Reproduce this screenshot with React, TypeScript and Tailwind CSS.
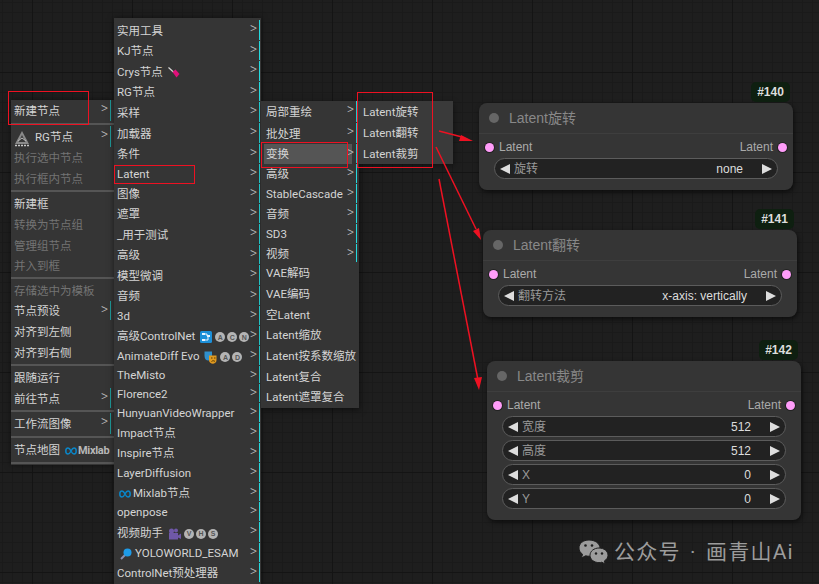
import React from 'react';

type Row = {
  label?: string;
  h: string;
  sub?: boolean;
  off?: boolean;
  hover?: boolean;
  icon?: React.ReactNode;
  after?: React.ReactNode;
  divider?: boolean;
};

const Badge = ({ t }: { t: string }) => (
  <span className="flex h-[10px] w-[10px] items-center justify-center rounded-full bg-[#b4b4b4] font-['Liberation_Sans',sans-serif] text-[7px] font-bold leading-none text-[#555]">
    {t}
  </span>
);

const Letters = ({ items }: { items: string[] }) => (
  <span className="ml-[3px] flex gap-[2px]">
    {items.map(t => <Badge key={t} t={t} />)}
  </span>
);

const Infinity2 = () => (
  <svg width="12" height="8" viewBox="0 0 12 8" fill="none" stroke="#0a86c8" strokeWidth="1.5" className="shrink-0">
    <path d="M6 4C5 2 4 1 3 1 1.700 1 .8 2.300.8 4S1.700 7 3 7c1 0 2-1 3-3s2-3 3-3c1.300 0 2.200 1.300 2.200 3S10.300 7 9 7C8 7 7 6 6 4Z" />
  </svg>
);

const RgLogo = () => (
  <svg width="16" height="17" viewBox="0 0 16 17" className="mr-[5px] shrink-0">
    <path d="M8 1 15 14H1Z" fill="#8a8a8a" />
    <path d="M8 5 11.500 12H4.500Z" fill="#3a3a3a" />
    <path d="M4 11 8 8 12 11" stroke="#bbb" fill="none" />
    <path d="M1 15.500H15" stroke="#c8c8c8" strokeWidth="1.500" strokeDasharray="2 1" />
  </svg>
);

const Brush = () => (
  <svg width="12" height="11" viewBox="0 0 12 11" className="ml-[5px] shrink-0">
    <path d="M0.500 0.500 6 5.500" stroke="#d8d8d8" strokeWidth="1.200" />
    <path d="M4.500 5 7.500 2.500 11.500 7 8.500 10.500Z" fill="#e0107a" />
  </svg>
);

const NetIcon = () => (
  <svg width="12" height="12" viewBox="0 0 12 12" className="ml-[5px] shrink-0">
    <rect width="12" height="12" rx="1.500" fill="#1c8fd8" />
    <path d="M2 2h3v2H2zM7 4h3v2H7zM2 8h3v2H2z" fill="#e8f4ff" />
    <path d="M5 3h2v2M5 9h3V6" stroke="#e8f4ff" fill="none" />
  </svg>
);

const Masks = () => (
  <svg width="13" height="13" viewBox="0 0 13 13" className="ml-[5px] shrink-0">
    <path d="M0.500 0.500H8V5C8 8 6 9.500 4.200 9.500S0.500 8 0.500 5Z" fill="#2f8fcc" />
    <path d="M5 4.500H12.500V9C12.500 11.500 10.500 12.800 8.800 12.800S5 11.500 5 9Z" fill="#e09a20" />
    <path d="M7 7h1.500M10 7h1.500M7.500 10.500c1-1 2.500-1 3.500 0" stroke="#5a3a00" fill="none" />
  </svg>
);

const Camera = () => (
  <svg width="13" height="12" viewBox="0 0 13 12" className="ml-[5px] shrink-0">
    <circle cx="3.500" cy="3" r="2.500" fill="#6f58a8" />
    <circle cx="8" cy="2.500" r="2" fill="#6f58a8" />
    <rect x="1" y="5" width="9" height="6.500" fill="#6f58a8" />
    <path d="M10 7.500 13 5.500V11L10 9.500Z" fill="#6f58a8" />
  </svg>
);

const Lens = () => (
  <svg width="12" height="12" viewBox="0 0 12 12" className="ml-[3px] mr-[3px] shrink-0">
    <path d="M1 11 5 7" stroke="#8a8fb0" strokeWidth="2" />
    <circle cx="7.500" cy="4.500" r="4" fill="#1e9be8" />
  </svg>
);

const mainMenu: Row[] = [
  { label: '新建节点', h: 'h-[22px]', sub: true },
  { divider: true, h: '' },
  { label: 'RG节点', h: 'h-[22px]', sub: true, icon: <RgLogo /> },
  { label: '执行选中节点', h: 'h-[20px]', off: true },
  { label: '执行框内节点', h: 'h-[21px]', off: true },
  { divider: true, h: '' },
  { label: '新建框', h: 'h-[21px]' },
  { label: '转换为节点组', h: 'h-[21px]', off: true },
  { label: '管理组节点', h: 'h-[21px]', off: true },
  { label: '并入到框', h: 'h-[20px]', off: true },
  { divider: true, h: '' },
  { label: '存储选中为模板', h: 'h-[21px]', off: true },
  { label: '节点预设', h: 'h-[20px]', sub: true },
  { label: '对齐到左侧', h: 'h-[21px]' },
  { label: '对齐到右侧', h: 'h-[21px]' },
  { divider: true, h: '' },
  { label: '跟随运行', h: 'h-[21px]' },
  { label: '前往节点', h: 'h-[21px]', sub: true },
  { divider: true, h: '' },
  { label: '工作流图像', h: 'h-[22px]', sub: true },
  { divider: true, h: '' },
  {
    label: '节点地图',
    h: 'h-[22px]',
    after: (
      <span className="ml-[5px] flex items-center gap-[1px] text-[11px] font-bold tracking-[-0.3px] text-[#b8b8b8]">
        <Infinity2 />Mixlab
      </span>
    ),
  },
  { divider: true, h: '' },
];

const nodeMenu: Row[] = [
  { label: '实用工具', h: 'h-[21px]', sub: true },
  { label: 'KJ节点', h: 'h-[20px]', sub: true },
  { label: 'Crys节点', h: 'h-[21px]', sub: true, after: <Brush /> },
  { label: 'RG节点', h: 'h-[20px]', sub: true },
  { label: '采样', h: 'h-[21px]', sub: true },
  { label: '加载器', h: 'h-[21px]', sub: true },
  { label: '条件', h: 'h-[20px]', sub: true },
  { label: 'Latent', h: 'h-[20px]', sub: true },
  { label: '图像', h: 'h-[20px]', sub: true },
  { label: '遮罩', h: 'h-[20px]', sub: true },
  { label: '_用于测试', h: 'h-[21px]', sub: true },
  { label: '高级', h: 'h-[20px]', sub: true },
  { label: '模型微调', h: 'h-[21px]', sub: true },
  { label: '音频', h: 'h-[20px]', sub: true },
  { label: '3d', h: 'h-[20px]', sub: true },
  { label: '高级ControlNet', h: 'h-[20px]', sub: true, after: <><NetIcon /><Letters items={['A', 'C', 'N']} /></> },
  { label: 'AnimateDiff Evo', h: 'h-[20px]', sub: true, after: <><Masks /><Letters items={['A', 'D']} /></> },
  { label: 'TheMisto', h: 'h-[18px]', sub: true },
  { label: 'Florence2', h: 'h-[19px]', sub: true },
  { label: 'HunyuanVideoWrapper', h: 'h-[20px]', sub: true },
  { label: 'Impact节点', h: 'h-[20px]', sub: true },
  { label: 'Inspire节点', h: 'h-[20px]', sub: true },
  { label: 'LayerDiffusion', h: 'h-[20px]', sub: true },
  { label: 'Mixlab节点', h: 'h-[19px]', sub: true, icon: <span className="ml-[2px] mr-[2px] flex"><Infinity2 /></span> },
  { label: 'openpose', h: 'h-[20px]', sub: true },
  { label: '视频助手', h: 'h-[21px]', sub: true, after: <><Camera /><Letters items={['V', 'H', 'S']} /></> },
  { label: 'YOLOWORLD_ESAM', h: 'h-[20px]', sub: true, icon: <Lens /> },
  { label: 'ControlNet预处理器', h: 'h-[20px]', sub: true },
];

const latentMenu: Row[] = [
  { label: '局部重绘', h: 'h-[22px]', sub: true },
  { label: '批处理', h: 'h-[21px]', sub: true },
  { label: '变换', h: 'h-[20px]', sub: true, hover: true },
  { label: '高级', h: 'h-[20px]', sub: true },
  { label: 'StableCascade', h: 'h-[20px]', sub: true },
  { label: '音频', h: 'h-[20px]', sub: true },
  { label: 'SD3', h: 'h-[20px]', sub: true },
  { label: '视频', h: 'h-[19px]', sub: true },
  { label: 'VAE解码', h: 'h-[20px]' },
  { label: 'VAE编码', h: 'h-[21px]' },
  { label: '空Latent', h: 'h-[21px]' },
  { label: 'Latent缩放', h: 'h-[20px]' },
  { label: 'Latent按系数缩放', h: 'h-[21px]' },
  { label: 'Latent复合', h: 'h-[21px]' },
  { label: 'Latent遮罩复合', h: 'h-[20px]' },
];

const transformMenu: Row[] = [
  { label: 'Latent旋转', h: 'h-[21px]' },
  { label: 'Latent翻转', h: 'h-[21px]' },
  { label: 'Latent裁剪', h: 'h-[21px]' },
];

const MenuRows = ({ rows, bar, pad }: { rows: Row[]; bar: string; pad: string }) => (
  <>
    {rows.map((r, i) =>
      r.divider ? (
        <div key={i} className="my-[1px] -mr-[2px] h-[2px] bg-[#555]" />
      ) : (
        <div
          key={i}
          className={`relative flex items-center whitespace-nowrap ${r.h} ${pad} ${r.off ? 'text-[#737373]' : 'text-[#d4d4d4]'}`}
        >
          {r.hover && <div className="absolute inset-y-0 left-[3px] right-[6px] bg-[#555]" />}
          <span className="relative top-[1px] flex items-center">
            {r.icon}
            {r.label}
            {r.after}
          </span>
          {r.sub && (
            <>
              <span className="absolute right-[4px] top-[-2px] text-[14px] font-light text-[#bdbdbd]">&gt;</span>
              <div className={`absolute bottom-[1px] right-[1px] top-[0px] w-[1px] ${bar}`} />
            </>
          )}
        </div>
      ),
    )}
  </>
);

const Tri = ({ right }: { right?: boolean }) => (
  <svg width="10" height="10" viewBox="0 0 10 10" className="shrink-0">
    <path d={right ? 'M0 0 10 5 0 10Z' : 'M10 0 0 5 10 10Z'} fill="#ddd" />
  </svg>
);

const Widget = ({ label, value }: { label: string; value: string }) => (
  <div className="flex h-[21px] items-center rounded-full border border-[#5c5c5c] bg-[#222] px-[5px] text-[12px]">
    <Tri />
    <span className="ml-[4px] font-['Liberation_Sans','Noto_Sans_CJK_SC',sans-serif] text-[#999]">{label}</span>
    <span className="ml-auto mr-[19px] text-[#ddd]">{value}</span>
    <Tri right />
  </div>
);

const Node = ({ pos, id, title, children, pb }: { pos: string; id: string; title: string; children: React.ReactNode; pb: string }) => (
  <div className={`absolute w-[314px] rounded-[8px] bg-[#353535] font-['Liberation_Sans','Noto_Sans_CJK_SC',sans-serif] shadow-[1px_2px_5px_rgba(0,0,0,0.6)] ${pos}`}>
    <div className="absolute right-[3px] top-[-21px] flex h-[20px] w-[39px] items-center justify-center rounded-[5px] bg-[#0e1f10] text-[12px] font-bold text-[#ddd]">
      {id}
    </div>
    <div className="flex h-[31px] items-center border-b border-[#3e3e3e] pl-[10px]">
      <span className="h-[10px] w-[10px] rounded-full bg-[#666]" />
      <span className="ml-[10px] text-[14px] text-[#888]">{title}</span>
    </div>
    <div className={`flex flex-col gap-[3px] px-[15px] pt-[5px] ${pb}`}>
      <div className="-mx-[9px] flex h-[16px] items-center text-[12px] text-[#aaa]">
        <span className="h-[9px] w-[9px] rounded-full bg-[#ff9cf9] ring-1 ring-[#222]" />
        <span className="ml-[5px]">Latent</span>
        <span className="ml-auto mr-[5px]">Latent</span>
        <span className="h-[9px] w-[9px] rounded-full bg-[#ff9cf9] ring-1 ring-[#222]" />
      </div>
      {children}
    </div>
  </div>
);

const Redbox = ({ pos }: { pos: string }) => (
  <div className={`absolute border border-[#ee1122] ${pos}`} />
);

export default function App() {
  return (
    <div className="relative h-[584px] w-[819px] overflow-hidden bg-[#1e1e1e] bg-[image:linear-gradient(90deg,#141414_1px,transparent_1px),linear-gradient(#141414_1px,transparent_1px),linear-gradient(90deg,#1a1a1a_1px,transparent_1px),linear-gradient(#1a1a1a_1px,transparent_1px)] bg-[size:100px_100px,100px_100px,10px_10px,10px_10px] bg-[position:32px_72px,32px_72px,2px_2px,2px_2px] font-['Roboto','Noto_Sans_CJK_SC',sans-serif] text-[11.5px]">
      {/* Context menus */}
      <div className="absolute left-[11px] top-[100px] w-[103px] bg-[#353535] pr-[2px] shadow-[0_0_6px_rgba(0,0,0,0.5)]">
        <MenuRows rows={mainMenu} bar="bg-[#1f9a9a]" pad="pl-[3px]" />
      </div>

      <div className="absolute left-[114px] top-[18px] h-[570px] w-[147px] bg-[#353535] pt-[2px] shadow-[0_0_6px_rgba(0,0,0,0.5)]">
        <MenuRows rows={nodeMenu} bar="bg-[#26d9dd]" pad="pl-[3px]" />
      </div>

      <div className="absolute left-[261px] top-[101px] h-[307px] w-[98px] bg-[#353535] pr-[1px] shadow-[1px_2px_6px_rgba(0,0,0,0.5)]">
        <MenuRows rows={latentMenu} bar="bg-[#26d9dd]" pad="pl-[5px]" />
      </div>

      <div className="absolute left-[358px] top-[101px] w-[95px] bg-[#3a3a3a] shadow-[1px_2px_6px_rgba(0,0,0,0.4)]">
        <MenuRows rows={transformMenu} bar="" pad="pl-[5px]" />
      </div>

      {/* Nodes */}
      <Node pos="left-[479px] top-[103px]" id="#140" title="Latent旋转" pb="pb-[11px]">
        <Widget label="旋转" value="none" />
      </Node>
      <Node pos="left-[483px] top-[230px]" id="#141" title="Latent翻转" pb="pb-[11px]">
        <Widget label="翻转方法" value="x-axis: vertically" />
      </Node>
      <Node pos="left-[487px] top-[361px]" id="#142" title="Latent裁剪" pb="pb-[11px]">
        <Widget label="宽度" value="512" />
        <Widget label="高度" value="512" />
        <Widget label="X" value="0" />
        <Widget label="Y" value="0" />
      </Node>

      {/* Annotations */}
      <Redbox pos="left-[8px] top-[91px] h-[34px] w-[81px]" />
      <Redbox pos="left-[114px] top-[165px] h-[19px] w-[81px]" />
      <Redbox pos="left-[261px] top-[142px] h-[26px] w-[87px]" />
      <Redbox pos="left-[357px] top-[92px] h-[76px] w-[76px]" />
      <svg className="pointer-events-none absolute left-0 top-0" width="819" height="584" viewBox="0 0 819 584">
        <path d="M439 131 462 137" stroke="#ee1122" strokeWidth="1.300" />
        <path d="M473 141 459 141 461 135Z" fill="#ee1122" />
        <path d="M436 147 476 229" stroke="#ee1122" strokeWidth="1.500" />
        <path d="M481 240 473 231 479 228Z" fill="#ee1122" />
        <path d="M439 179 478 380" stroke="#ee1122" strokeWidth="1.500" />
        <path d="M479 390 474 378 482 377Z" fill="#ee1122" />
      </svg>

      {/* Watermark */}
      <div className="absolute left-[578px] top-[539px] flex items-center text-[#9c9c9c]">
        <svg width="31" height="26" viewBox="0 0 31 26" className="shrink-0">
          <path d="M11 1C5 1 1 4.600 1 9c0 2.600 1.400 4.800 3.600 6.300L3.400 19l4.200-2.200c1.100.3 2.200.4 3.400.4 7 0 11-4 11-8.200C22 4.600 17 1 11 1Z" fill="#9c9c9c" stroke="#1f1f1f" />
          <path d="M21 9c-5 0-9 3.200-9 7.300s4 7.300 9 7.300c1 0 2-.1 2.900-.4l3.300 1.800-.9-3c2.300-1.400 3.700-3.500 3.700-5.700C30 12.200 26 9 21 9Z" fill="#9c9c9c" stroke="#1f1f1f" />
          <circle cx="7.500" cy="6.500" r="1.300" fill="#1f1f1f" />
          <circle cx="14" cy="6.500" r="1.300" fill="#1f1f1f" />
          <circle cx="18" cy="14.500" r="1.200" fill="#1f1f1f" />
          <circle cx="24" cy="14.500" r="1.200" fill="#1f1f1f" />
        </svg>
        <span className="ml-[5px] whitespace-nowrap text-[21px] leading-none tracking-[1.2px] [word-spacing:3px]">公众号 · 画青山Ai</span>
      </div>
    </div>
  );
}
